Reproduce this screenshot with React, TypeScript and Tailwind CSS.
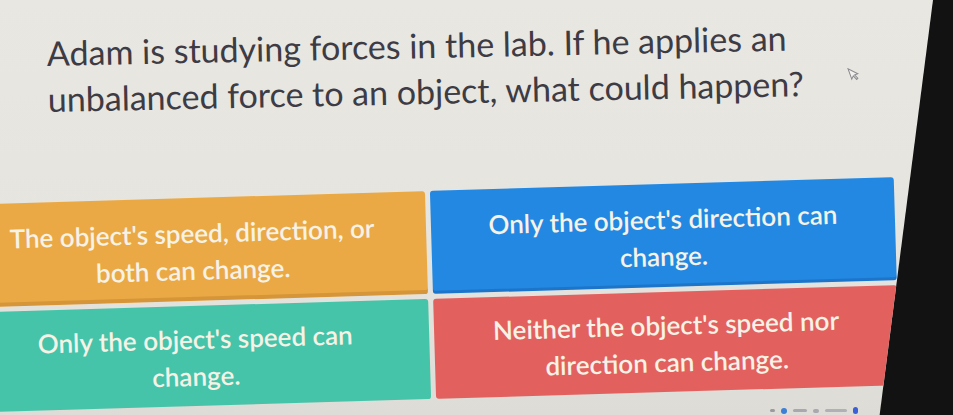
import React from "react";

const tiles = [
  { lines: ["The object's speed, direction, or", "both can change."], cls: "bg-[#eaa945] shadow-[inset_0_-4px_0_rgba(150,90,20,0.25)]" },
  { lines: ["Only the object's direction can", "change."], cls: "bg-[#2388e2] shadow-[inset_0_-3px_0_rgba(10,60,130,0.25)]" },
  { lines: ["Only the object's speed can", "change."], cls: "bg-[#45c4aa]" },
  { lines: ["Neither the object's speed nor", "direction can change."], cls: "bg-[#e2615f]" },
];

export default function App() {
  return (
    <div className="w-[953px] h-[415px] bg-[#121212] overflow-hidden">
      <div className="relative w-full h-full overflow-hidden bg-[linear-gradient(180deg,#e9e7e2_0%,#e6e4de_60%,#dedcd6_100%)] [clip-path:polygon(0_0,97.9%_0,92.3%_100%,0_100%)]">
        <div className="w-full h-full flex flex-col">
          <div className="pt-[21px] pl-[47px] text-[34px] leading-[46px] text-[#3d3b44] whitespace-nowrap font-['Lato',sans-serif] rotate-[-1.2deg]">
            Adam is studying forces in the lab. If he applies an
            <br />
            unbalanced force to an object, what could happen?
          </div>
          <div className="mt-[78px] ml-[-40px] w-[937px] grid grid-cols-[468px_464px] grid-rows-[103px_100px] gap-[5px] font-['Lato',sans-serif] rotate-[-1.7deg]">
            {tiles.map((t, i) => (
              <div
                key={i}
                className={`rounded-[3px] flex flex-col items-center justify-center pt-[4px] text-[26px] leading-[37px] font-semibold text-[#f6f2e6] ${t.cls}`}
              >
                {t.lines.map((l, j) => (
                  <div key={j} className="whitespace-nowrap">{l}</div>
                ))}
              </div>
            ))}
          </div>
          <div className="flex justify-end items-center gap-[6px] pr-[95px] mt-[8px]">
            <div className="w-[5px] h-[3px] bg-[#9a9aa0] rounded-sm" />
            <div className="w-[6px] h-[6px] bg-[#3b7fd6] rounded-full" />
            <div className="w-[14px] h-[3px] bg-[#a8a8ae] rounded-sm" />
            <div className="w-[6px] h-[4px] bg-[#a8a8ae] rounded-sm" />
            <div className="w-[22px] h-[3px] bg-[#b0b0b6] rounded-sm" />
            <div className="w-[5px] h-[7px] bg-[#3b5fd6] rounded-sm" />
          </div>
        </div>
        <svg className="absolute left-[849px] top-[66px] rotate-[-20deg]" width="10" height="15" viewBox="0 0 10 15">
          <path d="M1 1 L1 12 L3.5 9.5 L5.5 14 L7 13.3 L5 9 L8.5 9 Z" fill="#f2f1ee" stroke="#8c8b90" strokeWidth="1" />
        </svg>
      </div>
    </div>
  );
}
